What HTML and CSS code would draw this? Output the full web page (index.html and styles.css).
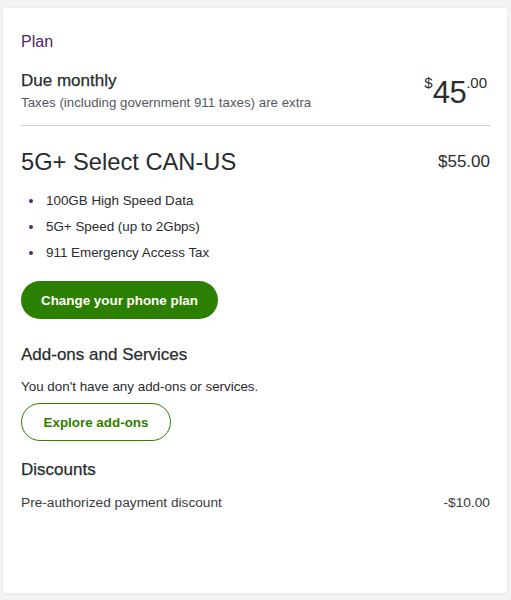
FILE: index.html
```html
<!DOCTYPE html>
<html lang="en">
<head>
<meta charset="utf-8">
<title>Plan</title>
<link rel="stylesheet" href="styles.css">
</head>
<body>
<div class="card">
  <div class="eyebrow">Plan</div>
  <div class="due-row">
    <div class="due-left">
      <div class="due-title">Due monthly</div>
      <div class="due-note">Taxes (including government 911 taxes) are extra</div>
    </div>
    <div class="price"><span class="sup">$</span><span class="big">45</span><span class="sup">.00</span></div>
  </div>
  <hr class="divider">
  <div class="plan-row">
    <div class="plan-name">5G+ Select CAN-US</div>
    <div class="plan-price">$55.00</div>
  </div>
  <ul class="features">
    <li>100GB High Speed Data</li>
    <li>5G+ Speed (up to 2Gbps)</li>
    <li>911 Emergency Access Tax</li>
  </ul>
  <button class="btn btn-primary">Change your phone plan</button>
  <div class="section-title addons-title">Add-ons and Services</div>
  <div class="body-text addons-text">You don't have any add-ons or services.</div>
  <button class="btn btn-outline">Explore add-ons</button>
  <div class="section-title discounts-title">Discounts</div>
  <div class="discount-row">
    <span>Pre-authorized payment discount</span>
    <span>-$10.00</span>
  </div>
</div>
</body>
</html>
```
FILE: styles.css
```css
html, body {
  margin: 0;
  padding: 0;
}
body {
  background: #f3f3f6;
  font-family: "Liberation Sans", Arial, sans-serif;
  color: #2a2c2e;
  padding: 7px 3px 6px 2px;
}
.card {
  background: #ffffff;
  border: 1px solid #ececef;
  border-radius: 4px;
  height: 587px;
  box-sizing: border-box;
  padding: 24px 17px 0 18px;
  box-shadow: 0 1px 2px rgba(0, 0, 0, 0.04);
}
.eyebrow {
  color: #4b286d;
  font-size: 16px;
  line-height: 20px;
}
.due-row {
  display: flex;
  justify-content: space-between;
  align-items: flex-start;
  margin-top: 18px;
}
.due-title {
  font-size: 17px;
  line-height: 22px;
  color: #2a2c2e;
  -webkit-text-stroke: 0.25px #2a2c2e;
}
.due-note {
  font-size: 13.3px;
  line-height: 18px;
  margin-top: 2px;
  color: #54595f;
}
.price {
  display: flex;
  align-items: flex-start;
  color: #2a2c2e;
  margin-top: 0;
  margin-right: 3px;
}
.price .sup {
  font-size: 15px;
  line-height: 18px;
  margin-top: 4px;
}
.price .big {
  font-size: 31px;
  line-height: 34px;
  margin: 6px 0 0 0;
  letter-spacing: -0.5px;
}
.divider {
  border: 0;
  border-top: 1px solid #cfcfd3;
  margin: 13px 0 0 0;
  height: 0;
}
.plan-row {
  display: flex;
  justify-content: space-between;
  align-items: center;
  margin-top: 21px;
}
.plan-name {
  font-size: 23.7px;
  line-height: 30px;
}
.plan-price {
  font-size: 17px;
  line-height: 22px;
  color: #2a2c2e;
}
.features {
  list-style: none;
  margin: 11px 0 0 0;
  padding: 0;
}
.features li {
  position: relative;
  font-size: 13.4px;
  line-height: 26px;
  padding-left: 25px;
  color: #2a2c2e;
}
.features li::before {
  content: "";
  position: absolute;
  left: 8px;
  top: 11px;
  width: 4px;
  height: 4px;
  border-radius: 50%;
  background: #4b286d;
}
.btn {
  display: block;
  font-family: "Liberation Sans", Arial, sans-serif;
  font-weight: bold;
  font-size: 13.4px;
  height: 38px;
  border-radius: 19px;
  box-sizing: border-box;
  cursor: pointer;
}
.btn-primary {
  margin-top: 15px;
  width: 197px;
  background: #2b8000;
  color: #ffffff;
  border: 0;
}
.btn-outline {
  margin-top: 7px;
  width: 150px;
  background: #ffffff;
  color: #2b8000;
  border: 1px solid #2b8000;
}
.section-title {
  font-size: 17px;
  line-height: 22px;
  -webkit-text-stroke: 0.25px #2a2c2e;
}
.addons-title {
  margin-top: 25px;
}
.body-text {
  font-size: 13.4px;
  line-height: 18px;
}
.addons-text {
  margin-top: 12px;
}
.discounts-title {
  margin-top: 18px;
}
.discount-row {
  display: flex;
  justify-content: space-between;
  font-size: 13.7px;
  line-height: 18px;
  margin-top: 13px;
  color: #3a3c40;
}
```
